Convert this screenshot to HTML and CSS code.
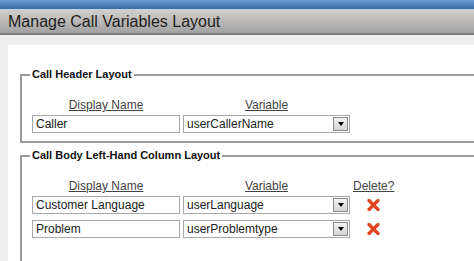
FILE: index.html
```html
<!DOCTYPE html>
<html>
<head>
    <link rel="stylesheet" href="styles.css">
</head>
<body>

<div class="topbar"></div>
<div class="titlebar">Manage Call Variables Layout</div>

<div class="page">
    <div class="panel">

        <fieldset class="group">
            <legend>Call Header Layout</legend>
            <div class="rows">
                <div class="head">Display Name</div>
                <div class="head">Variable</div>
                <div></div>

                <div class="field">Caller</div>
                <div class="select"><span>userCallerName</span><i class="arrow"></i></div>
                <div></div>
            </div>
        </fieldset>

        <fieldset class="group body-group">
            <legend>Call Body Left-Hand Column Layout</legend>
            <div class="rows">
                <div class="head">Display Name</div>
                <div class="head">Variable</div>
                <div class="head">Delete?</div>

                <div class="field">Customer Language</div>
                <div class="select"><span>userLanguage</span><i class="arrow"></i></div>
                <div class="del">
                    <svg width="13" height="12" viewBox="0 0 13 12"><path d="M2 1.5 L11 10.5 M11 1.5 L2 10.5" stroke="#e0451f" stroke-width="3.2" stroke-linecap="round"/></svg>
                </div>

                <div class="field">Problem</div>
                <div class="select"><span>userProblemtype</span><i class="arrow"></i></div>
                <div class="del">
                    <svg width="13" height="12" viewBox="0 0 13 12"><path d="M2 1.5 L11 10.5 M11 1.5 L2 10.5" stroke="#e0451f" stroke-width="3.2" stroke-linecap="round"/></svg>
                </div>
            </div>
        </fieldset>

    </div>
</div>

</body>
</html>
```

FILE: styles.css
```css
* {
    box-sizing: border-box;
}
body {
    margin: 0;
    font-family: "Liberation Sans", Arial, sans-serif;
    background-color: #efefef;
    overflow: hidden;
}
.topbar {
    height: 10px;
    background: linear-gradient(#6b9dd6, #3b6ba7);
    border-bottom: 1px solid #c3d2e2;
}
.titlebar {
    height: 25px;
    padding-left: 8px;
    line-height: 23px;
    font-size: 16px;
    color: #1e1e1e;
    background: linear-gradient(#d2cecb, #a2a2a2);
    border-bottom: 2px solid #7c7c7c;
}
.page {
    padding: 10px 0 0 8px;
}
.panel {
    background-color: #fff;
    width: 620px;
    min-height: 300px;
    padding: 23px 0 0 12px;
}
.group {
    margin: 0 0 6px 0;
    padding: 0 0 8px 10px;
    border: 2px solid #9a9a9a;
    width: 600px;
}
.body-group {
    padding-bottom: 60px;
}
.group legend {
    font-size: 11px;
    font-weight: bold;
    line-height: 13px;
    color: #111;
    padding: 0 2px;
    margin-left: -2px;
}
.rows {
    display: grid;
    grid-template-columns: 148px 167px 40px;
    column-gap: 3px;
    row-gap: 6px;
    padding-top: 17px;
}
.head {
    font-size: 12px;
    line-height: 14px;
    color: #444;
    text-decoration: underline;
    text-align: center;
    margin-bottom: -3px;
}
.field, .select {
    height: 18px;
    border: 1px solid #a8a8a8;
    font-size: 12px;
    line-height: 16px;
    color: #222;
    padding-left: 3px;
}
.select {
    display: flex;
    justify-content: space-between;
    align-items: center;
    padding-right: 1px;
}
.arrow {
    width: 15px;
    height: 14px;
    border: 1px solid #8a8a8a;
    background: linear-gradient(#f2f2f2, #d6d6d6);
    display: flex;
    align-items: center;
    justify-content: center;
}
.arrow::after {
    content: "";
    border-left: 3px solid transparent;
    border-right: 3px solid transparent;
    border-top: 4px solid #000;
}
.del {
    display: flex;
    align-items: center;
    justify-content: center;
}
```
